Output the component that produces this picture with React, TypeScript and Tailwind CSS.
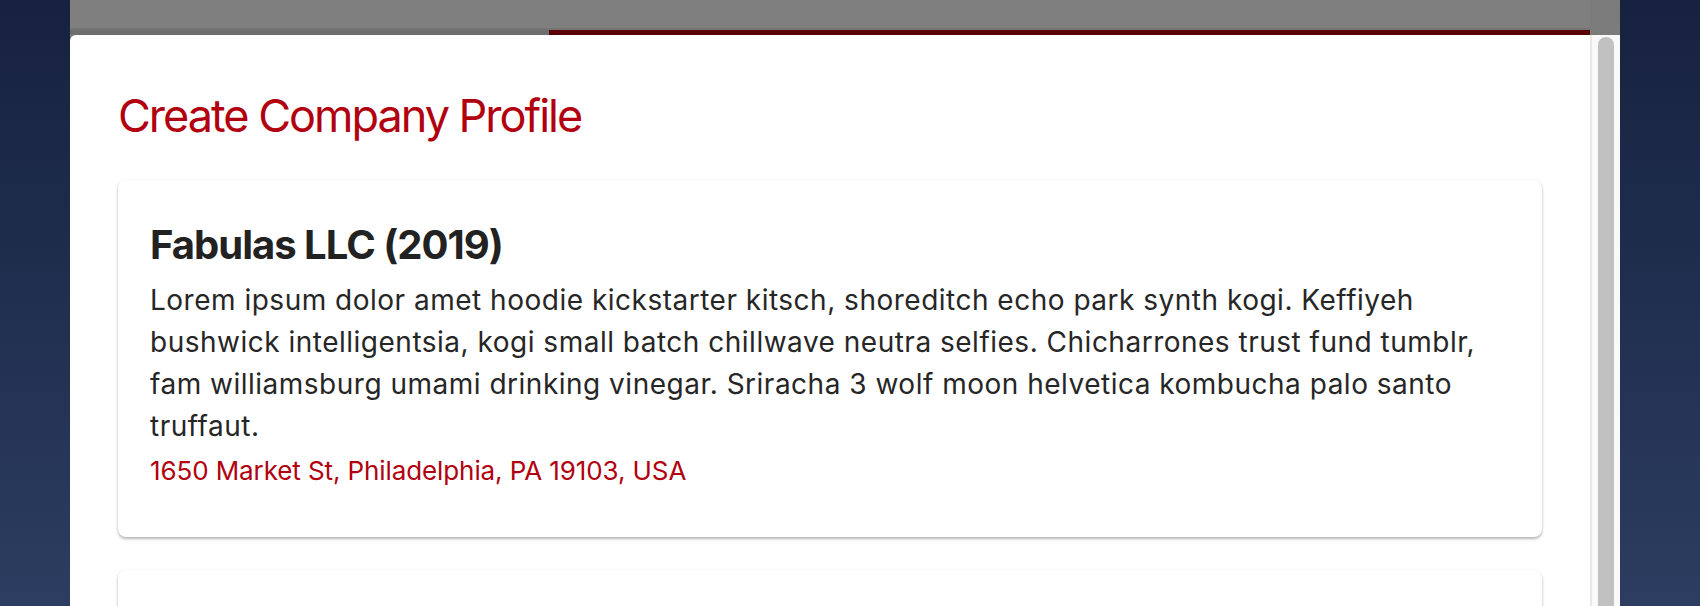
import React from "react";

export default function App() {
  return (
    <div
      className="flex h-[606px] w-[1700px] overflow-hidden bg-gradient-to-b from-[#16223f] to-[#2c3d61]"
      style={{ fontFamily: "Inter, 'Noto Sans', sans-serif" }}
    >
      <div className="w-[70px] shrink-0" />
      <div className="flex w-[1550px] shrink-0 flex-col bg-[#7f7f7f]">
        {/* top darkened strip */}
        <div className="flex h-[35px] shrink-0">
          <div className="flex w-[1520px] flex-col">
            <div className="h-[28px] bg-[#7f7f7f]" />
            <div className="h-[2px] bg-[#747474]" />
            <div className="flex h-[5px]">
              <div className="w-[479px] bg-[#6e6e6e]" />
              <div className="flex-1 bg-[#5c0008]" />
            </div>
          </div>
          <div className="w-[30px] bg-[#7b7b7b]" />
        </div>
        {/* modal row */}
        <div className="flex min-h-0 flex-1">
          <div className="w-[1520px] overflow-hidden rounded-tl-[6px] bg-white px-[48px] pt-[53px]">
            <h1 className="text-[45px] leading-[56px] font-normal tracking-[-2px] text-[#b1000f]">
              Create Company Profile
            </h1>
            <div className="mt-[36px] rounded-[8px] bg-white px-[32px] pt-[42px] pb-[47px] shadow-[0_2px_3px_rgba(0,0,0,0.28),0_0_2px_rgba(0,0,0,0.08)]">
              <h2 className="text-[40px] leading-[46px] font-bold tracking-[-1px] text-[#222222]">
                Fabulas LLC (2019)
              </h2>
              <p className="mt-[11px] text-[28px] leading-[42px] tracking-[0.5px] text-[#262626]">
                Lorem ipsum dolor amet hoodie kickstarter kitsch, shoreditch echo park synth kogi. Keffiyeh
                <br />
                bushwick intelligentsia, kogi small batch chillwave neutra selfies. Chicharrones trust fund tumblr,
                <br />
                fam williamsburg umami drinking vinegar. Sriracha 3 wolf moon helvetica kombucha palo santo
                <br />
                truffaut.
              </p>
              <p className="mt-[5px] text-[26px] leading-[38px] tracking-[-0.1px] text-[#b1000f]">
                1650 Market St, Philadelphia, PA 19103, USA
              </p>
            </div>
            <div className="mt-[33px] h-[200px] rounded-[8px] bg-white shadow-[0_2px_3px_rgba(0,0,0,0.28),0_0_2px_rgba(0,0,0,0.08)]" />
          </div>
          {/* scrollbar */}
          <div className="flex w-[30px] border-l-2 border-[#e8e8e8] bg-[#f9f9f9] pl-[6px] pt-[2px]">
            <div className="h-[600px] w-[16px] rounded-full bg-[#c1c1c1]" />
          </div>
        </div>
      </div>
    </div>
  );
}
